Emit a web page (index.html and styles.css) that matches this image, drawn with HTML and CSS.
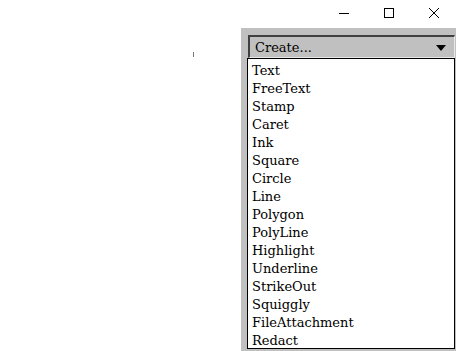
FILE: index.html
```html
<!DOCTYPE html>
<html lang="en">
<head>
  <meta charset="UTF-8">
  <title>Annotations</title>
  <link rel="stylesheet" href="styles.css">
</head>
<body>

  <div class="titlebar">
    <div class="caption-btn">
      <svg width="10" height="10" viewBox="0 0 10 10"><path d="M0 5.5H10" stroke="#000" stroke-width="1"/></svg>
    </div>
    <div class="caption-btn">
      <svg width="10" height="10" viewBox="0 0 10 10"><rect x="0.5" y="0.5" width="9" height="9" fill="none" stroke="#000" stroke-width="1"/></svg>
    </div>
    <div class="caption-btn">
      <svg width="10" height="10" viewBox="0 0 10 10"><path d="M0 0L10 10M10 0L0 10" stroke="#000" stroke-width="1"/></svg>
    </div>
  </div>

  <div class="workspace">
    <div class="canvas">
      <span class="cursor-mark"></span>
    </div>

    <div class="panel">
      <div class="select">
        <span class="select-label">Create...</span>
        <span class="select-arrow"></span>
      </div>
      <ul class="options">
        <li>Text</li>
        <li>FreeText</li>
        <li>Stamp</li>
        <li>Caret</li>
        <li>Ink</li>
        <li>Square</li>
        <li>Circle</li>
        <li>Line</li>
        <li>Polygon</li>
        <li>PolyLine</li>
        <li>Highlight</li>
        <li>Underline</li>
        <li>StrikeOut</li>
        <li>Squiggly</li>
        <li>FileAttachment</li>
        <li>Redact</li>
      </ul>
    </div>
  </div>

</body>
</html>
```

FILE: styles.css
```css
* {
  box-sizing: border-box;
}

html, body {
  height: 100%;
}

body {
  margin: 0;
  background: #fff;
  font-family: "DejaVu Serif", "Liberation Serif", serif;
  overflow: hidden;
}

.titlebar {
  display: flex;
  justify-content: flex-end;
  height: 28px;
}

.caption-btn {
  width: 45px;
  height: 28px;
  display: flex;
  align-items: center;
  justify-content: center;
  padding-bottom: 3px;
}

.caption-btn svg {
  display: block;
}

.workspace {
  display: flex;
  height: 323px;
}

.canvas {
  flex: 1;
  position: relative;
}

.cursor-mark {
  position: absolute;
  left: 193px;
  top: 24px;
  width: 1px;
  height: 5px;
  background: #777;
}

.panel {
  width: 215px;
  background: #c0c0c0;
  padding: 7px 1px 0 6px;
}

.select {
  display: flex;
  align-items: center;
  justify-content: space-between;
  height: 23px;
  margin-left: 1px;
  padding: 1px 8px 0 5px;
  border-top: 2px solid #404040;
  border-left: 2px solid #404040;
  border-right: 1px solid #e8e8e8;
  border-bottom: 1px solid #e8e8e8;
  font-size: 13px;
  color: #000;
}

.select-arrow {
  width: 0;
  height: 0;
  border-left: 5px solid transparent;
  border-right: 5px solid transparent;
  border-top: 6px solid #000;
}

.options {
  list-style: none;
  margin: 0;
  padding: 3px 0 0 4px;
  background: #fff;
  border: 1px solid #000;
  height: 291px;
  font-size: 13px;
  color: #000;
}

.options li {
  height: 18px;
  line-height: 18px;
}
```
